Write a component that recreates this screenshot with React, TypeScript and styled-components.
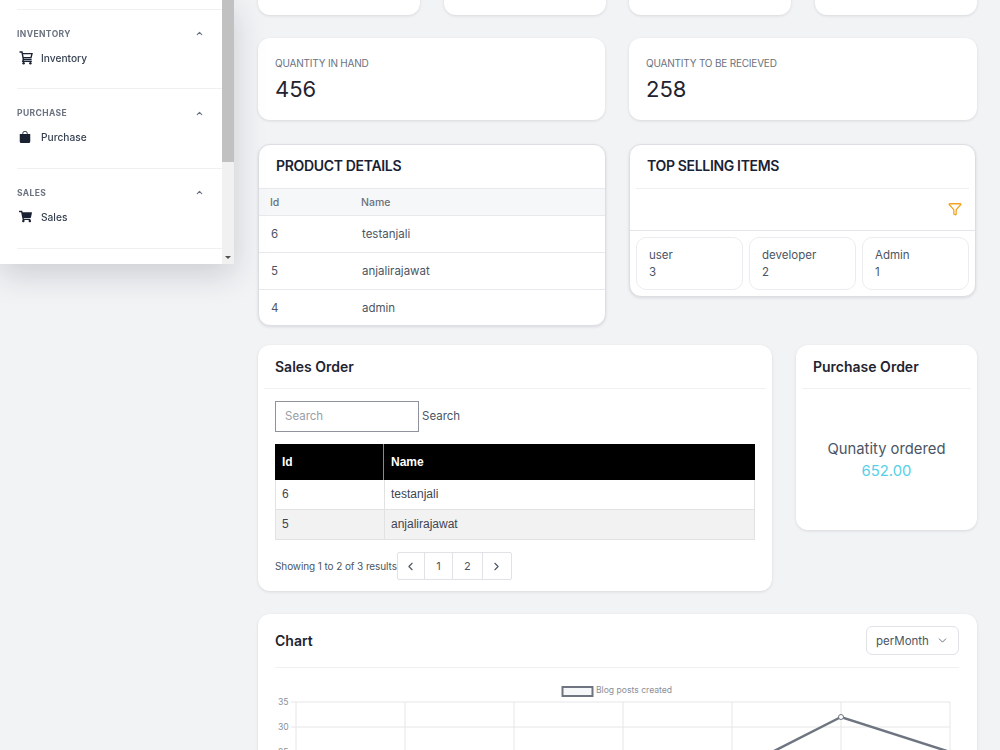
import React from 'react';
import styled, { createGlobalStyle } from 'styled-components';
import { ChevronDown, ChevronLeft, ChevronRight, ChevronUp, Filter } from 'lucide-react';
import { FaShoppingCart } from 'react-icons/fa';
import { BsBagFill } from 'react-icons/bs';

const GlobalStyle = createGlobalStyle`
  html, body {
    margin: 0;
    height: 100%;
    overflow: hidden;
    background: #f2f3f5;
  }
  * {
    box-sizing: border-box;
  }
  body {
    font-family: Inter, 'Noto Sans', sans-serif;
    color: #1f2430;
  }
`;

const Sidebar = styled.aside`
  position: fixed;
  top: 0;
  left: 0;
  width: 234px;
  height: 264px;
  display: flex;
  background: #fff;
  overflow: hidden;
  box-shadow: 0 10px 30px rgba(30, 35, 50, 0.18);
`;

const SideList = styled.div`
  flex: 1;
  padding: 8.6px 0 0 17px;
`;

const SideSection = styled.section`
  height: 79.7px;
  padding-top: 18px;
  border-top: 1px solid #eff0f2;
`;

const SideHeader = styled.div`
  display: flex;
  align-items: center;
  justify-content: space-between;
  padding-right: 18px;
  height: 12px;
  font-size: 8.5px;
  font-weight: 700;
  letter-spacing: 0.4px;
  color: #6b7280;
  svg {
    color: #6b7280;
  }
`;

const SideItem = styled.div`
  display: flex;
  align-items: center;
  margin-top: 10px;
  height: 16px;
  font-size: 10.2px;
  font-weight: 500;
  color: #374151;
`;

const SideIcon = styled.span`
  width: 24px;
  padding-left: 2px;
  display: flex;
  align-items: center;
  color: #1a2133;
`;

const Scrollbar = styled.div`
  width: 12px;
  background: #f1f1f1;
  display: flex;
  flex-direction: column;
  justify-content: space-between;
`;

const Thumb = styled.div`
  height: 162px;
  background: #c1c1c1;
`;

const ScrollArrow = styled.div`
  margin: 0 auto 5px;
  width: 0;
  height: 0;
  border-left: 3px solid transparent;
  border-right: 3px solid transparent;
  border-top: 3px solid #505050;
`;

const Main = styled.main`
  margin: -65px 23px 0 258px;
  display: flex;
  flex-direction: column;
`;

const Grid = styled.div<{ $columns: string; $gap: number; $mb: number }>`
  display: grid;
  grid-template-columns: ${({ $columns }) => $columns};
  column-gap: ${({ $gap }) => $gap}px;
  margin-bottom: ${({ $mb }) => $mb}px;
  align-items: start;
`;

const Card = styled.div`
  background: #fff;
  border-radius: 12px;
  box-shadow: 0 1px 3px rgba(30, 35, 50, 0.12);
`;

const TopCard = styled(Card)`
  height: 80px;
`;

const StatCard = styled(Card)`
  height: 82px;
  padding: 18px 17px;
`;

const StatLabel = styled.div`
  font-size: 10px;
  letter-spacing: -0.2px;
  line-height: 14px;
  color: #6b7280;
`;

const StatValue = styled.div`
  margin-top: 5px;
  font-size: 22px;
  line-height: 28px;
  color: #1f2430;
`;

const BorderCard = styled(Card)`
  border: 1px solid #dcdee3;
  overflow: hidden;
`;

const UpperTitle = styled.h3`
  margin: 0;
  font-size: 14px;
  font-weight: 600;
  letter-spacing: -0.33px;
  color: #1a2133;
  height: 43px;
  line-height: 42px;
  padding-left: 17px;
`;

const DetailTable = styled.table`
  width: 100%;
  border-collapse: separate;
  border-spacing: 0;
  font-size: 11.5px;
  color: #4b5563;
  th {
    height: 28px;
    background: #f6f7f8;
    border-top: 1px solid #e8e9ec;
    border-bottom: 1px solid #e8e9ec;
    font-size: 10.5px;
    font-weight: 500;
    text-align: left;
    padding: 0 0 0 11px;
    color: #6b7280;
  }
  td {
    height: 37px;
    padding: 0 0 0 12px;
    border-bottom: 1px solid #e8e9ec;
  }
  tr:last-child td {
    height: 35px;
    border-bottom: none;
  }
`;

const IdHeader = styled.th`
  width: 91px;
`;

const TitleRule = styled.div`
  height: 1px;
  margin: 0 6px;
  background: #eeeff1;
`;

const FilterBar = styled.div`
  height: 42px;
  display: flex;
  align-items: center;
  justify-content: flex-end;
  padding: 0 13px 1px 0;
  border-bottom: 1px solid #e4e5e9;
  color: #f4a21f;
`;

const ItemGrid = styled.div`
  display: grid;
  grid-template-columns: repeat(3, 1fr);
  gap: 6px;
  padding: 6px;
`;

const ItemCard = styled.div`
  height: 53px;
  padding: 9px 12px;
  border: 1px solid #ebecef;
  border-radius: 10px;
  font-size: 11.5px;
  line-height: 17px;
  color: #4b5563;
`;

const PanelTitle = styled.h3`
  margin: 0;
  height: 43px;
  line-height: 43px;
  padding-left: 17px;
  font-size: 14px;
  font-weight: 600;
  color: #1f2430;
`;

const PanelRule = styled.div`
  height: 1px;
  margin: 0 6px;
  background: #f0f1f3;
`;

const SalesBody = styled.div`
  padding: 12px 17px 11px;
`;

const SearchRow = styled.div`
  display: flex;
  align-items: center;
  gap: 3px;
  font-size: 11.5px;
  line-height: 13px;
  color: #4b5563;
`;

const SearchInput = styled.input`
  width: 144px;
  height: 31px;
  padding: 0 9px 1px;
  border: 1px solid #8f929c;
  font: inherit;
  outline: none;
  &::placeholder {
    color: #9a9ea8;
  }
`;

const SalesTable = styled.table`
  width: 480px;
  margin-top: 12px;
  border-collapse: separate;
  border-spacing: 0;
  table-layout: fixed;
  font-family: 'Liberation Sans', Arial, sans-serif;
  font-size: 12px;
  color: #3f4450;
  th {
    height: 36px;
    background: #000;
    color: #fff;
    text-align: left;
    padding: 0 7px 1px;
    font-weight: 700;
    border-right: 1px solid #8a8a8a;
  }
  th:last-child {
    border-right: none;
  }
  td {
    height: 30px;
    padding: 0 6px 1px;
    border-left: 1px solid #e2e2e2;
    border-bottom: 1px solid #e2e2e2;
  }
  td:last-child {
    border-right: 1px solid #e2e2e2;
  }
  tbody tr:nth-child(even) {
    background: #f2f2f2;
  }
`;

const IdColumn = styled.col`
  width: 109px;
`;

const Pager = styled.div`
  display: flex;
  align-items: center;
  margin-top: 12px;
  font-size: 10px;
  letter-spacing: -0.1px;
  color: #4b5563;
`;

const PageGroup = styled.div`
  display: flex;
  height: 28px;
  border: 1px solid #e0e2e6;
  border-radius: 2px;
`;

const PageButton = styled.div<{ $width: number }>`
  width: ${({ $width }) => $width}px;
  display: flex;
  align-items: center;
  justify-content: center;
  border-right: 1px solid #e0e2e6;
  font-size: 11px;
  &:last-child {
    border-right: none;
  }
`;

const PurchaseBody = styled.div`
  height: 141px;
  display: flex;
  flex-direction: column;
  align-items: center;
  justify-content: center;
  font-size: 14.8px;
  line-height: 22px;
  color: #4b5563;
`;

const Teal = styled.div`
  color: #56d0e6;
`;

const ChartCard = styled(Card)`
  height: 300px;
  padding: 12px 18px 0 17px;
`;

const ChartHead = styled.div`
  display: flex;
  align-items: center;
  justify-content: space-between;
  height: 42px;
  padding-bottom: 12px;
  border-bottom: 1px solid #eff0f2;
`;

const ChartTitle = styled.h3`
  margin: 0;
  font-size: 14px;
  font-weight: 600;
`;

const PeriodSelect = styled.div`
  width: 93px;
  height: 29px;
  display: flex;
  align-items: center;
  justify-content: space-between;
  padding: 0 9px 0 9px;
  border: 1px solid #e0e2e6;
  border-radius: 6px;
  font-size: 11.5px;
  color: #4b5563;
`;

const ChartSvg = styled.svg`
  display: block;
  margin: 14px 0 0 -17px;
`;

const ChartLabel = styled.text`
  font-size: 8.6px;
  fill: #8a8f99;
  font-family: Inter, sans-serif;
`;

// outline cart: handle, basket, lower rail and two solid wheels
const InventoryCart = () => (
  <svg width={14} height={14} viewBox="0 0 14 14" fill="none" stroke="currentColor" strokeWidth={1.4}>
    <path d="M0.5 1H3L4.4 8.5H12.6" />
    <path d="M3.3 2.6H13L12 6.6H4" />
    <path d="M4.4 8.5L3.8 10.4H12.8" />
    <circle cx={4.6} cy={12.3} r={1.2} fill="currentColor" stroke="none" />
    <circle cx={11.4} cy={12.3} r={1.2} fill="currentColor" stroke="none" />
  </svg>
);

// gridlines sit on a 109px / 25px step, origin is the card's left edge
const gridX = [38, 147, 256, 365, 474, 583, 692];
const gridY = [20, 45, 70, 95];

const Chart = () => (
  <ChartSvg width={719} height={100} viewBox="0 0 719 100">
    <rect x={304.5} y={5} width={30} height={9} fill="#f5f7f8" stroke="#6f7580" strokeWidth={2} />
    <ChartLabel x={338} y={11}>Blog posts created</ChartLabel>
    {gridX.map((x) => (
      <line key={x} x1={x} x2={x} y1={20} y2={100} stroke="#e6e6e6" />
    ))}
    {gridY.map((y) => (
      <line key={y} x1={33} x2={692} y1={y} y2={y} stroke="#e6e6e6" />
    ))}
    <ChartLabel x={20} y={23}>35</ChartLabel>
    <ChartLabel x={20} y={48}>30</ChartLabel>
    <ChartLabel x={20} y={73}>25</ChartLabel>
    <polyline points="465,95 583,35 692,70" fill="none" stroke="#6f7580" strokeWidth={2.5} />
    <circle cx={583} cy={35} r={2.5} fill="#fff" stroke="#6f7580" />
  </ChartSvg>
);

const sections = [
  { title: 'INVENTORY', label: 'Inventory', icon: <InventoryCart /> },
  { title: 'PURCHASE', label: 'Purchase', icon: <BsBagFill size={12} /> },
  { title: 'SALES', label: 'Sales', icon: <FaShoppingCart size={13} /> },
];

const App = () => (
  <>
    <GlobalStyle />
    <Main>
      <Grid $columns="162px 162px 162px 162px" $gap={23.5} $mb={23}>
        <TopCard />
        <TopCard />
        <TopCard />
        <TopCard />
      </Grid>
      <Grid $columns="347px 348px" $gap={24} $mb={24}>
        <StatCard>
          <StatLabel>QUANTITY IN HAND</StatLabel>
          <StatValue>456</StatValue>
        </StatCard>
        <StatCard>
          <StatLabel>QUANTITY TO BE RECIEVED</StatLabel>
          <StatValue>258</StatValue>
        </StatCard>
      </Grid>
      <Grid $columns="347.5px 347px" $gap={23.5} $mb={19}>
        <BorderCard>
          <UpperTitle>PRODUCT DETAILS</UpperTitle>
          <DetailTable>
            <thead>
              <tr>
                <IdHeader>Id</IdHeader>
                <th>Name</th>
              </tr>
            </thead>
            <tbody>
              <tr><td>6</td><td>testanjali</td></tr>
              <tr><td>5</td><td>anjalirajawat</td></tr>
              <tr><td>4</td><td>admin</td></tr>
            </tbody>
          </DetailTable>
        </BorderCard>
        <BorderCard>
          <UpperTitle>TOP SELLING ITEMS</UpperTitle>
          <TitleRule />
          <FilterBar>
            <Filter size={14} strokeWidth={2.2} />
          </FilterBar>
          <ItemGrid>
            <ItemCard>user<br />3</ItemCard>
            <ItemCard>developer<br />2</ItemCard>
            <ItemCard>Admin<br />1</ItemCard>
          </ItemGrid>
        </BorderCard>
      </Grid>
      <Grid $columns="514px 181px" $gap={24} $mb={23}>
        <Card>
          <PanelTitle>Sales Order</PanelTitle>
          <PanelRule />
          <SalesBody>
            <SearchRow>
              <SearchInput placeholder="Search" />
              Search
            </SearchRow>
            <SalesTable>
              <colgroup>
                <IdColumn />
                <col />
              </colgroup>
              <thead>
                <tr><th>Id</th><th>Name</th></tr>
              </thead>
              <tbody>
                <tr><td>6</td><td>testanjali</td></tr>
                <tr><td>5</td><td>anjalirajawat</td></tr>
              </tbody>
            </SalesTable>
            <Pager>
              Showing 1 to 2 of 3 results
              <PageGroup>
                <PageButton $width={27}><ChevronLeft size={13} /></PageButton>
                <PageButton $width={28}>1</PageButton>
                <PageButton $width={30}>2</PageButton>
                <PageButton $width={28}><ChevronRight size={13} /></PageButton>
              </PageGroup>
            </Pager>
          </SalesBody>
        </Card>
        <Card>
          <PanelTitle>Purchase Order</PanelTitle>
          <PanelRule />
          <PurchaseBody>
            Qunatity ordered
            <Teal>652.00</Teal>
          </PurchaseBody>
        </Card>
      </Grid>
      <ChartCard>
        <ChartHead>
          <ChartTitle>Chart</ChartTitle>
          <PeriodSelect>
            perMonth
            <ChevronDown size={13} strokeWidth={1.5} />
          </PeriodSelect>
        </ChartHead>
        <Chart />
      </ChartCard>
    </Main>
    <Sidebar>
      <SideList>
        {sections.map((s) => (
          <SideSection key={s.title}>
            <SideHeader>
              {s.title}
              <ChevronUp size={9} strokeWidth={3} />
            </SideHeader>
            <SideItem>
              <SideIcon>{s.icon}</SideIcon>
              {s.label}
            </SideItem>
          </SideSection>
        ))}
        <SideSection />
      </SideList>
      <Scrollbar>
        <Thumb />
        <ScrollArrow />
      </Scrollbar>
    </Sidebar>
  </>
);

export default App;
